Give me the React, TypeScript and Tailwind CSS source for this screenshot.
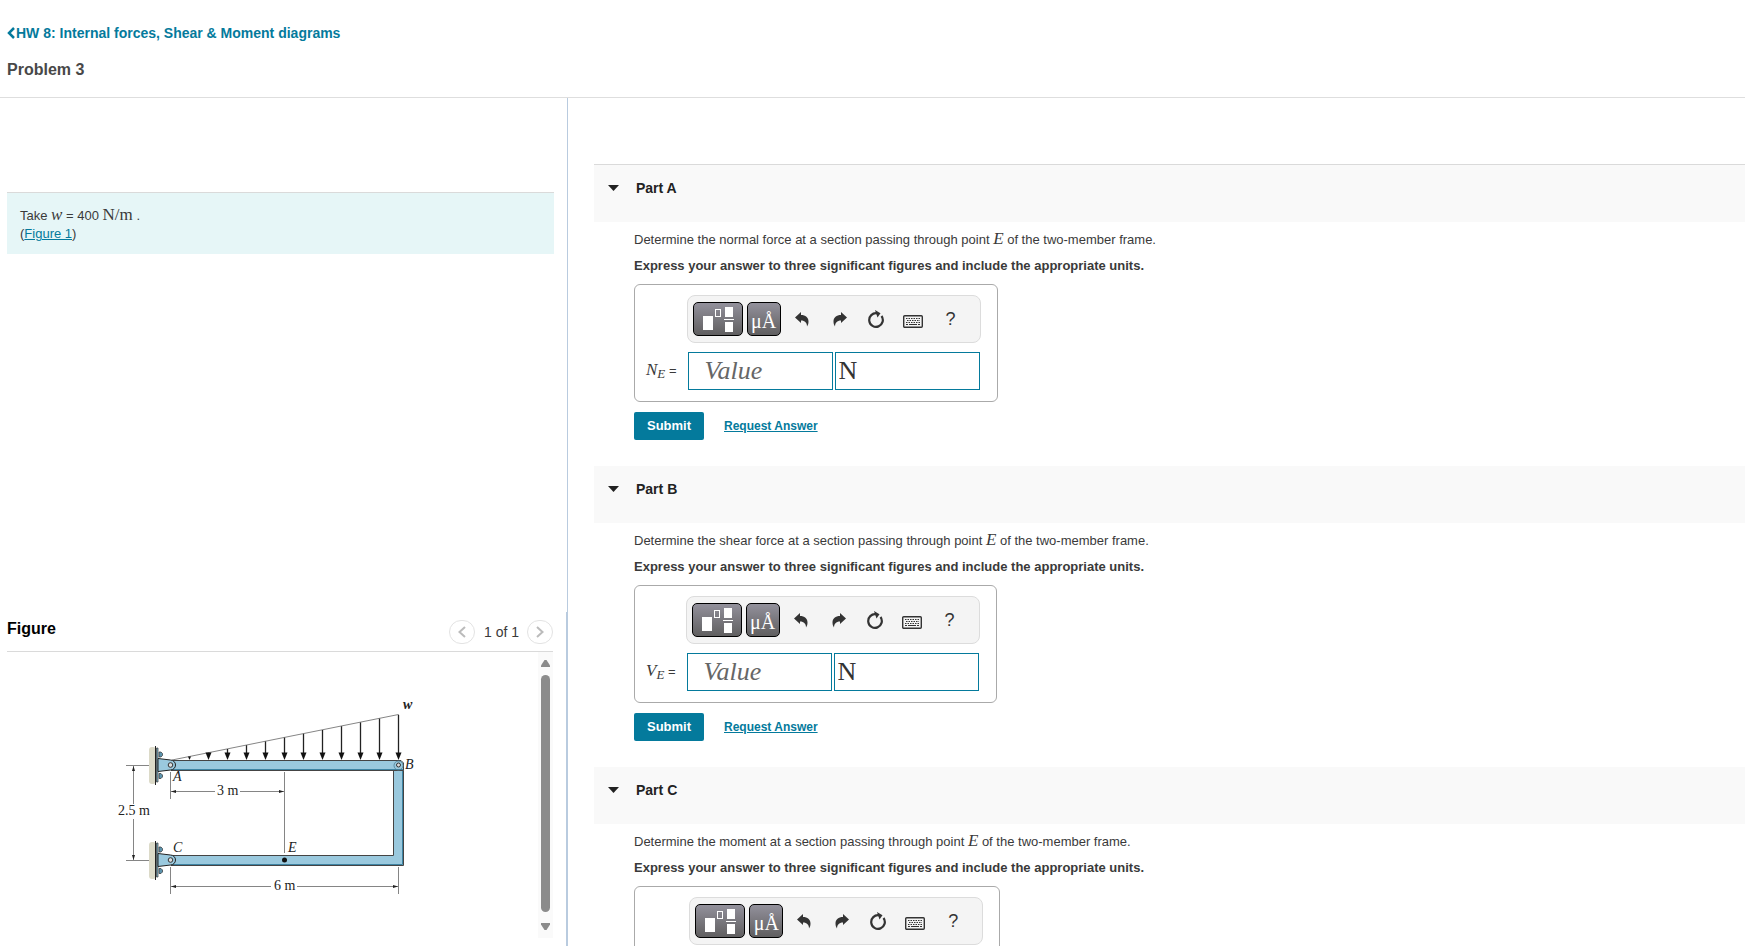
import type { ReactNode } from 'react';

interface Part {
  id: string;
  quantity: string;
  symbol: string;
  unit: string;
}

const PARTS: Part[] = [
  { id: 'A', quantity: 'normal force', symbol: 'N', unit: 'N' },
  { id: 'B', quantity: 'shear force', symbol: 'V', unit: 'N' },
  { id: 'C', quantity: 'moment', symbol: 'M', unit: '' },
];

const LOAD_ARROWS = [189, 208, 227, 246, 265, 284, 303, 322, 341, 360, 379, 398];

function MathText({ children }: { children: ReactNode }) {
  return <span className="font-['Liberation_Serif',serif] text-[17px] leading-none italic">{children}</span>;
}

function TemplateIcon() {
  return (
    <svg width="32" height="26" viewBox="0 0 32 26" fill="#fff" aria-hidden="true">
      <rect x="1" y="10" width="10" height="14" />
      <rect x="13.5" y="3.5" width="5" height="7" fill="none" stroke="#fff" />
      <rect x="23" y="1" width="8" height="10" />
      <rect x="22" y="13" width="10" height="1" />
      <rect x="23" y="16" width="8" height="10" />
    </svg>
  );
}

function UndoIcon() {
  return (
    <svg width="14" height="15" viewBox="0 0 14 15" fill="#333" aria-hidden="true">
      <path d="M0 5.500 6 0v3C10.500 3 13.500 5.500 13.500 9.500c0 2-.500 3.500-1.500 5C12 11 10 8.500 6 8.500V11Z" />
    </svg>
  );
}

function RedoIcon() {
  return (
    <svg width="14" height="15" viewBox="0 0 14 15" fill="#333" aria-hidden="true">
      <path d="M14 5.500 8 0v3C3.500 3 .500 5.500 .500 9.500c0 2 .500 3.500 1.500 5C2 11 4 8.500 8 8.500V11Z" />
    </svg>
  );
}

function ResetIcon() {
  return (
    <svg width="18" height="18" viewBox="0 0 18 18" fill="none" aria-hidden="true">
      <path d="M10 3.300A6.800 6.800 0 1 0 14.500 6" stroke="#333" strokeWidth="2.200" />
      <path d="M8 0 13.500 3.300 10.500 7.500Z" fill="#333" />
    </svg>
  );
}

function KeyboardIcon() {
  return (
    <svg width="20" height="13" viewBox="0 0 20 13" fill="none" stroke="#333" aria-hidden="true">
      <rect x="0.700" y="0.700" width="18.600" height="11.600" rx="1" strokeWidth="1.400" />
      <path d="M3 3.500h14M4 5.500h13M3 7.500h14" strokeWidth="1.200" strokeDasharray="1.500 1" />
      <path d="M3 9.500h2M6 9.500h8M15 9.500h2" />
    </svg>
  );
}

function Support({ y }: { y: number }) {
  return (
    <g transform={`translate(0 ${y})`}>
      <rect x="149" y="-18" width="7" height="37" rx="3" fill="#dcdac8" />
      <path d="M159-13h2l1.500 1.500v2L161-8h-2ZM159 8.500h2l1.500 1.500v2L161 13.500h-2Z" fill="#5b93ad" stroke="#333" strokeWidth="0.700" />
      <path d="M156.500-17H158v34h-1.500Z" fill="#7fb4cb" stroke="#333" strokeWidth="0.700" />
      <path d="M155.500-19v39" stroke="#222" />
      <path d="M158-6.500 170.500-5a5 5 0 0 1 0 10L158 6.500Z" fill="#9ac9de" stroke="#222" />
      <circle cx="170.500" cy="0" r="2.300" fill="#ddd" stroke="#333" />
    </g>
  );
}

function FrameDrawing() {
  return (
    <svg
      width="320"
      height="220"
      viewBox="110 690 320 220"
      fill="none"
      className="font-['Liberation_Serif',serif] text-sm"
      role="img"
      aria-label="Two-member frame"
    >
      <g stroke="#777" strokeWidth="0.900">
        <path d="M172 760 398.500 714.500" />
        <path d="M126 765.500h27M126 860.500h27M133.500 766v38M133.500 819v41" />
        <path d="M170.500 772v27M170.500 867v27M284.500 772v81M398.500 867v27" />
        <path d="M171 791.500h44M240 791.500h44M171 886.500h100M297 886.500h101" />
      </g>
      <path
        d="m171 791.500 5-1.500v3ZM284 791.500l-5-1.500v3ZM171 886.500l5-1.500v3ZM398 886.500l-5-1.500v3ZM133.500 766l-1.500 5h3ZM133.500 860l-1.500-5h3Z"
        fill="#222"
      />
      {LOAD_ARROWS.map((x, index) => {
        const top = 760 - (x - 172) * 0.2;
        return index === 0 ? (
          <path key={x} d={`M${x - 1} 756.500h3l-1.500 3.500Z`} fill="#111" />
        ) : (
          <g key={x}>
            <path d={`M${x + 0.5} ${top}V755`} stroke="#222" strokeWidth="1.300" />
            <path d={`M${x - 2.5} 752.500h6L${x + 0.5} 760Z`} fill="#111" />
          </g>
        );
      })}
      <path d="M393.500 770.500h10v95H171v-10h222.500Z" fill="#9ac9de" stroke="#444" />
      <path d="M172 864.500h230.500V771" stroke="#3e84a3" />
      <path d="M171 760.500h230l2.500 2.500v7.500H171Z" fill="#9ac9de" stroke="#444" />
      <path d="M172 769.500h231" stroke="#3e84a3" />
      <circle cx="398.500" cy="765.500" r="4.500" stroke="#4c7f96" strokeWidth="0.800" />
      <circle cx="398.500" cy="765" r="2" fill="#ddd" stroke="#333" />
      <circle cx="284.500" cy="860" r="2.500" fill="#111" />
      <Support y={765} />
      <Support y={860} />
      <g fill="#222">
        <g fontStyle="italic">
          <text x="173" y="781">A</text>
          <text x="405" y="769">B</text>
          <text x="173" y="852">C</text>
          <text x="288" y="852">E</text>
          <text x="403" y="709" fontWeight="bold">w</text>
        </g>
        <text x="217" y="795">3 m</text>
        <text x="274" y="890">6 m</text>
        <text x="118" y="815">2.5 m</text>
      </g>
    </svg>
  );
}

function Toolbar() {
  const dark =
    'flex h-[34px] items-center justify-center rounded-[5px] border border-black bg-linear-to-b from-[#93919c] to-[#605f60]';
  return (
    <div className="flex h-12 w-[294px] items-center rounded-lg border border-[#dcdcdc] bg-[#f4f4f4] pl-[5px]">
      <button type="button" aria-label="Templates" className={`${dark} w-[50px]`}>
        <TemplateIcon />
      </button>
      <button
        type="button"
        aria-label="Symbols"
        className={`${dark} ml-1 w-[34px] pt-1 font-['Liberation_Serif',serif] text-xl leading-none text-white`}
      >
        μÅ
      </button>
      <div className="ml-3 flex items-center">
        <button type="button" aria-label="Undo" className="flex w-[38px] justify-start pl-[2px]">
          <UndoIcon />
        </button>
        <button type="button" aria-label="Redo" className="flex w-9 justify-start pl-[2px]">
          <RedoIcon />
        </button>
        <button type="button" aria-label="Reset" className="flex w-9 justify-start">
          <ResetIcon />
        </button>
        <button type="button" aria-label="Keyboard shortcuts" className="flex w-[38px] justify-start pt-1">
          <KeyboardIcon />
        </button>
        <button type="button" aria-label="Help" className="w-5 text-lg leading-none text-[#333]">
          ?
        </button>
      </div>
    </div>
  );
}

function PartSection({ part }: { part: Part }) {
  return (
    <section>
      <h2 className="flex h-[57px] items-start bg-[#f9f9f9] pt-[13px] pl-[14px] text-sm leading-5 font-bold text-[#222]">
        <button type="button" className="flex items-center gap-[17px]">
          <svg width="11" height="6" viewBox="0 0 11 6" fill="#222" aria-hidden="true">
            <path d="M0 0h11L5.500 6Z" />
          </svg>
          Part {part.id}
        </button>
      </h2>
      <div className="px-10 pt-2 pb-[26px] text-[13px] leading-5">
        <p>
          Determine the {part.quantity} at a section passing through point <MathText>E</MathText> of the two-member
          frame.
        </p>
        <p className="mt-[6px] font-bold">
          Express your answer to three significant figures and include the appropriate units.
        </p>
        <div className="mt-2 flex w-fit flex-col items-end gap-[9px] rounded-md border border-[#aaa] pt-[10px] pr-4 pb-[11px] pl-[11px]">
          <Toolbar />
          <div className="flex items-center">
            <label htmlFor={`value-${part.id}`} className="pr-[10px]">
              <MathText>
                {part.symbol}
                <sub className="text-[13px]">E</sub>
              </MathText>{' '}
              =
            </label>
            <div className="flex w-[294px] gap-[2px] px-px font-['Liberation_Serif',serif] text-[26px]">
              <input
                id={`value-${part.id}`}
                placeholder="Value"
                className="h-[38px] w-[145px] border border-[#047a9c] pl-4 placeholder:text-[#666] placeholder:italic"
              />
              <input
                aria-label="Units"
                defaultValue={part.unit}
                className="h-[38px] w-[145px] border border-[#047a9c] pl-[3px] text-[#333]"
              />
            </div>
          </div>
        </div>
        <div className="mt-[10px] flex items-center gap-5">
          <button type="button" className="h-7 w-[70px] rounded-xs bg-[#047a9c] text-[13px] font-bold text-white">
            Submit
          </button>
          <a href="#" className="text-xs font-bold text-[#047a9c] underline">
            Request Answer
          </a>
        </div>
      </div>
    </section>
  );
}

export default function App() {
  return (
    <div className="flex h-screen flex-col overflow-hidden bg-white font-['Liberation_Sans',Arial,sans-serif] text-[#3a3a3a]">
      <header className="border-b border-[#dedede] px-[7px] pt-[23px] pb-[15px]">
        <a href="#" className="flex items-center text-sm leading-5 font-bold text-[#047a9c]">
          <svg width="8" height="12" viewBox="0 0 8 12" fill="none" stroke="currentColor" strokeWidth="2.500" className="mr-px" aria-hidden="true">
            <path d="M7 1 2 6l5 5" />
          </svg>
          HW 8: Internal forces, Shear &amp; Moment diagrams
        </a>
        <h1 className="mt-[15px] text-base leading-6 font-bold text-[#484848]">Problem 3</h1>
      </header>

      <div className="flex min-h-0 flex-1">
        <aside className="flex w-[568px] shrink-0 flex-col">
          <div className="flex-1 border-r border-[#b9cbdf] pt-[94px] pr-[13px] pl-[7px]">
            <div className="border-t border-[#dadada] bg-[#e6f6f7] px-[13px] pt-[13px] pb-[11px] text-[13px] leading-[18px]">
              <p>
                Take <MathText>w</MathText> = 400{' '}
                <span className="font-['Liberation_Serif',serif] text-[17px] leading-none">N/m</span> .
              </p>
              <p>
                (
                <a href="#" className="text-[#047a9c] underline">
                  Figure 1
                </a>
                )
              </p>
            </div>
          </div>

          <section className="h-[334px] border-r-2 border-[#b9cbdf] pr-[13px] pl-[7px]">
            <div className="flex h-10 items-center justify-between border-b border-[#dadada]">
              <h2 className="pb-[6px] text-base font-bold text-black">Figure</h2>
              <div className="flex items-center text-sm">
                <button type="button" aria-label="Previous figure" className="flex h-6 w-[26px] items-center justify-center rounded-full border border-[#e3e3e3]">
                  <svg width="8" height="12" viewBox="0 0 8 12" fill="none" stroke="#bbb" strokeWidth="2" aria-hidden="true">
                    <path d="M7 1 1.500 6 7 11" />
                  </svg>
                </button>
                <span className="w-[52px] pl-px text-center">1 of 1</span>
                <button type="button" aria-label="Next figure" className="flex h-6 w-[26px] items-center justify-center rounded-full border border-[#e3e3e3]">
                  <svg width="8" height="12" viewBox="0 0 8 12" fill="none" stroke="#bbb" strokeWidth="2" aria-hidden="true">
                    <path d="M1 1 6.500 6 1 11" />
                  </svg>
                </button>
              </div>
            </div>
            <div className="flex h-[286px] justify-between">
              <div className="pt-[38px] pl-[103px]">
                <FrameDrawing />
              </div>
              <div className="flex w-[15px] flex-col items-center justify-between bg-[#fafafa] py-2">
                <svg width="9" height="7" viewBox="0 0 9 7" fill="#8b8b8b" aria-hidden="true">
                  <path d="M3.500 0h2L9 5.500V7H0V5.500Z" />
                </svg>
                <div className="mt-2 mb-[11px] w-[9px] flex-1 rounded-full bg-[#8b8b8b]" />
                <svg width="9" height="7" viewBox="0 0 9 7" fill="#8b8b8b" aria-hidden="true">
                  <path d="M3.500 7h2L9 1.500V0H0v1.500Z" />
                </svg>
              </div>
            </div>
          </section>
        </aside>

        <main className="min-w-0 flex-1 overflow-y-auto pt-[66px] pl-[26px] [scrollbar-width:none]">
          <div className="border-t border-[#dadada]">
            {PARTS.map((part) => (
              <PartSection key={part.id} part={part} />
            ))}
          </div>
        </main>
      </div>
    </div>
  );
}
